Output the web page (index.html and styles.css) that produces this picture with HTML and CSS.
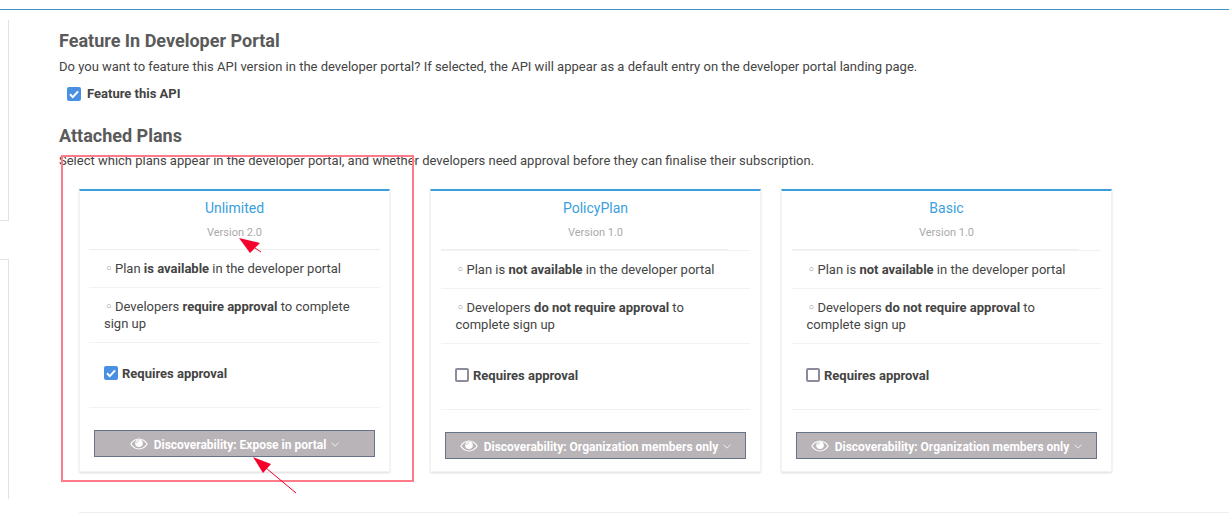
FILE: index.html
```html
<!DOCTYPE html>
<html>
<head>
    <title>Feature In Developer Portal</title>
    <link rel="stylesheet" href="styles.css">
</head>
<body>
    <svg width="0" height="0" class="defs">
        <symbol id="eye" viewBox="0 0 18 12">
            <path fill="currentColor" fill-rule="evenodd" d="M9 .5C5.200.5 2 2.700.2 6 2 9.300 5.200 11.500 9 11.500S16 9.300 17.800 6C16 2.700 12.800.5 9 .5zM9 1.500c3.200 0 5.800 1.800 7.500 4.500-1.700 2.700-4.300 4.500-7.500 4.500S3.200 8.700 1.500 6C3.200 3.300 5.800 1.500 9 1.500z"/>
            <circle fill="currentColor" cx="9" cy="5.200" r="3.800"/>
            <path fill="none" stroke="#b9b4b7" stroke-width="0.8" d="M6.600 5c.1-1.200 1-2 2.200-2.200"/>
        </symbol>
    </svg>

    <div class="top-rule"></div>
    <div class="page">
        <div class="side">
            <div class="side-box side-box-one"></div>
            <div class="side-box side-box-two"></div>
        </div>
        <main class="content">
            <h2 class="section-title">Feature In Developer Portal</h2>
            <p class="section-text">Do you want to feature this API version in the developer portal? If selected, the API will appear as a default entry on the developer portal landing page.</p>
            <label class="feature-check">
                <span class="box checked"><svg viewBox="0 0 14 14"><path d="M3 7.300l2.800 2.800L11 4.400"/></svg></span>
                Feature this API
            </label>

            <h2 class="section-title plans-title">Attached Plans</h2>
            <p class="section-text plans-text">Select which plans appear in the developer portal, and whether developers need approval before they can finalise their subscription.</p>

            <div class="plans">
                <section class="plan plan-first">
                    <h3 class="plan-name">Unlimited</h3>
                    <div class="plan-version">Version 2.0</div>
                    <div class="plan-row"><span class="dot">◦</span>Plan <b>is available</b> in the developer portal</div>
                    <div class="plan-row"><span class="dot">◦</span>Developers <b>require approval</b> to complete sign up</div>
                    <div class="plan-row approval">
                        <span class="box checked"><svg viewBox="0 0 14 14"><path d="M3 7.300l2.800 2.800L11 4.400"/></svg></span>
                        Requires approval
                    </div>
                    <div class="plan-foot">
                        <button class="discover"><svg class="eye"><use href="#eye"/></svg> Discoverability: Expose in portal <svg class="caret" viewBox="0 0 8 5"><path d="M.5.700L4 4.200 7.500.700"/></svg></button>
                    </div>
                </section>

                <section class="plan">
                    <h3 class="plan-name">PolicyPlan</h3>
                    <div class="plan-version">Version 1.0</div>
                    <div class="plan-row"><span class="dot">◦</span>Plan is <b>not available</b> in the developer portal</div>
                    <div class="plan-row"><span class="dot">◦</span>Developers <b>do not require approval</b> to complete sign up</div>
                    <div class="plan-row approval">
                        <span class="box"></span>
                        Requires approval
                    </div>
                    <div class="plan-foot">
                        <button class="discover"><svg class="eye"><use href="#eye"/></svg> Discoverability: Organization members only <svg class="caret" viewBox="0 0 8 5"><path d="M.5.700L4 4.200 7.500.700"/></svg></button>
                    </div>
                </section>

                <section class="plan">
                    <h3 class="plan-name">Basic</h3>
                    <div class="plan-version">Version 1.0</div>
                    <div class="plan-row"><span class="dot">◦</span>Plan is <b>not available</b> in the developer portal</div>
                    <div class="plan-row"><span class="dot">◦</span>Developers <b>do not require approval</b> to complete sign up</div>
                    <div class="plan-row approval">
                        <span class="box"></span>
                        Requires approval
                    </div>
                    <div class="plan-foot">
                        <button class="discover"><svg class="eye"><use href="#eye"/></svg> Discoverability: Organization members only <svg class="caret" viewBox="0 0 8 5"><path d="M.5.700L4 4.200 7.500.700"/></svg></button>
                    </div>
                </section>
            </div>
            <div class="bottom-rule"></div>
        </main>
    </div>

    <!-- screenshot annotations -->
    <div class="mark-box"></div>
    <svg class="mark-arrows" width="1229" height="531" viewBox="0 0 1229 531">
        <path class="arrow-head" d="M239 238L260 243 250 253z"/>
        <path class="arrow-line" d="M255 248L261 252"/>
        <path class="arrow-head" d="M253 457L271 464 263 473z"/>
        <path class="arrow-line" d="M266 468L296 493"/>
    </svg>
</body>
</html>
```

FILE: styles.css
```css
* {
    box-sizing: border-box;
}

html, body {
    margin: 0;
    height: 531px;
    overflow: hidden;
}

body {
    background: #fff;
    color: #444;
    font-family: Roboto, sans-serif;
    font-size: 13px;
    line-height: 17px;
}

.defs {
    position: absolute;
}

.top-rule {
    height: 1px;
    margin-top: 9px;
    background: #3a93bd;
}

.page {
    display: flex;
}

.side {
    width: 59px;
    flex: none;
    padding-top: 10px;
}

.side-box {
    width: 9px;
    border-right: 1px solid #e2e2e2;
}

.side-box-one {
    height: 201px;
    border-bottom: 1px solid #e2e2e2;
}

.side-box-two {
    height: 240px;
    margin-top: 38px;
    border-top: 1px solid #e2e2e2;
}

.content {
    flex: 1;
}

.section-title {
    margin: 21px 0 0;
    font-size: 18px;
    line-height: 20px;
    font-weight: 700;
    color: #5a5a5a;
}

.plans-title {
    margin-top: 24px;
}

.section-text {
    margin: 7px 0 0;
}

.plans-text {
    margin-top: 6px;
}

.feature-check {
    display: flex;
    align-items: center;
    gap: 6px;
    margin: 10px 0 0 8px;
    font-weight: 700;
    color: #444;
}

.box {
    width: 14px;
    height: 14px;
    flex: none;
    display: inline-block;
    border: 2px solid #8d8b9b;
    border-radius: 2px;
    background: #fff;
}

.box.checked {
    border: none;
    background: #4a90e2;
}

.box svg {
    display: block;
    fill: none;
    stroke: #fff;
    stroke-width: 2;
}

.plans {
    display: flex;
    gap: 20px;
    margin: 20px 0 0 20px;
}

.plan {
    width: 331px;
    height: 283px;
    display: flex;
    flex-direction: column;
    padding: 0 10px;
    border: 1px solid #f2f2f2;
    border-top: 2px solid #3a9fdc;
    box-shadow: 0 1px 2px rgba(0, 0, 0, 0.14);
}

.plan-first {
    width: 311px;
    margin-right: 20px;
    padding: 0 9px;
}

.plan-name {
    margin: 9px 0 0;
    font-size: 14px;
    line-height: 17px;
    font-weight: 400;
    text-align: center;
    color: #3a9fdc;
}

.plan-version {
    margin: 8px 22px 0 0;
    padding: 0 0 9px 22px;
    font-size: 11px;
    line-height: 15px;
    text-align: center;
    color: #aaa;
    border-bottom: 1px solid #eee;
}

.plan-first .plan-version {
    margin-right: 0;
    padding-left: 0;
}

.plan-version + .plan-row {
    border-top: 1px solid #f2f2f2;
}

.plan-first .plan-version + .plan-row {
    border-top: none;
}

.plan-row {
    padding: 10px 15px 10px 14.5px;
    border-bottom: 1px solid #f2f2f2;
}

.plan-first .plan-row {
    padding-left: 15px;
}

.plan-row b {
    font-weight: 700;
}

.dot {
    display: inline-block;
    width: 11px;
    padding-left: 1px;
    font-family: "DejaVu Sans", sans-serif;
    line-height: 14px;
    color: #888;
}

.approval {
    display: flex;
    align-items: flex-start;
    gap: 4px;
    height: 66px;
    padding: 24px 14px 0;
    line-height: 16px;
    font-weight: 700;
    color: #444;
}

.plan-first .approval {
    height: 65px;
    padding: 23px 15px 0;
}

.plan-foot {
    margin-top: auto;
    padding: 0 4px 12px;
}

.plan-first .plan-foot {
    padding: 0 5px 14px;
}

.discover {
    width: 100%;
    height: 27px;
    display: flex;
    align-items: center;
    justify-content: center;
    gap: 5px;
    padding: 2px 0 0;
    border: 1px solid #667485;
    background: #b9b4b7;
    color: #fff;
    font-family: Roboto, sans-serif;
    font-size: 12px;
    font-weight: 700;
}

.eye {
    width: 18px;
    height: 12px;
    margin: -2px 1px 0 0;
}

.caret {
    width: 8px;
    height: 5px;
    fill: none;
    stroke: #fff;
    stroke-width: 0.8;
}

.bottom-rule {
    height: 1px;
    margin: 40px 0 0 20px;
    background: #eee;
}

.mark-box {
    position: absolute;
    left: 61px;
    top: 155px;
    width: 353px;
    height: 327px;
    border: 2px solid #ff7b8a;
}

.mark-arrows {
    position: absolute;
    left: 0;
    top: 0;
}

.arrow-head {
    fill: #f5002b;
}

.arrow-line {
    fill: none;
    stroke: #f5002b;
    stroke-width: 1;
}
```
